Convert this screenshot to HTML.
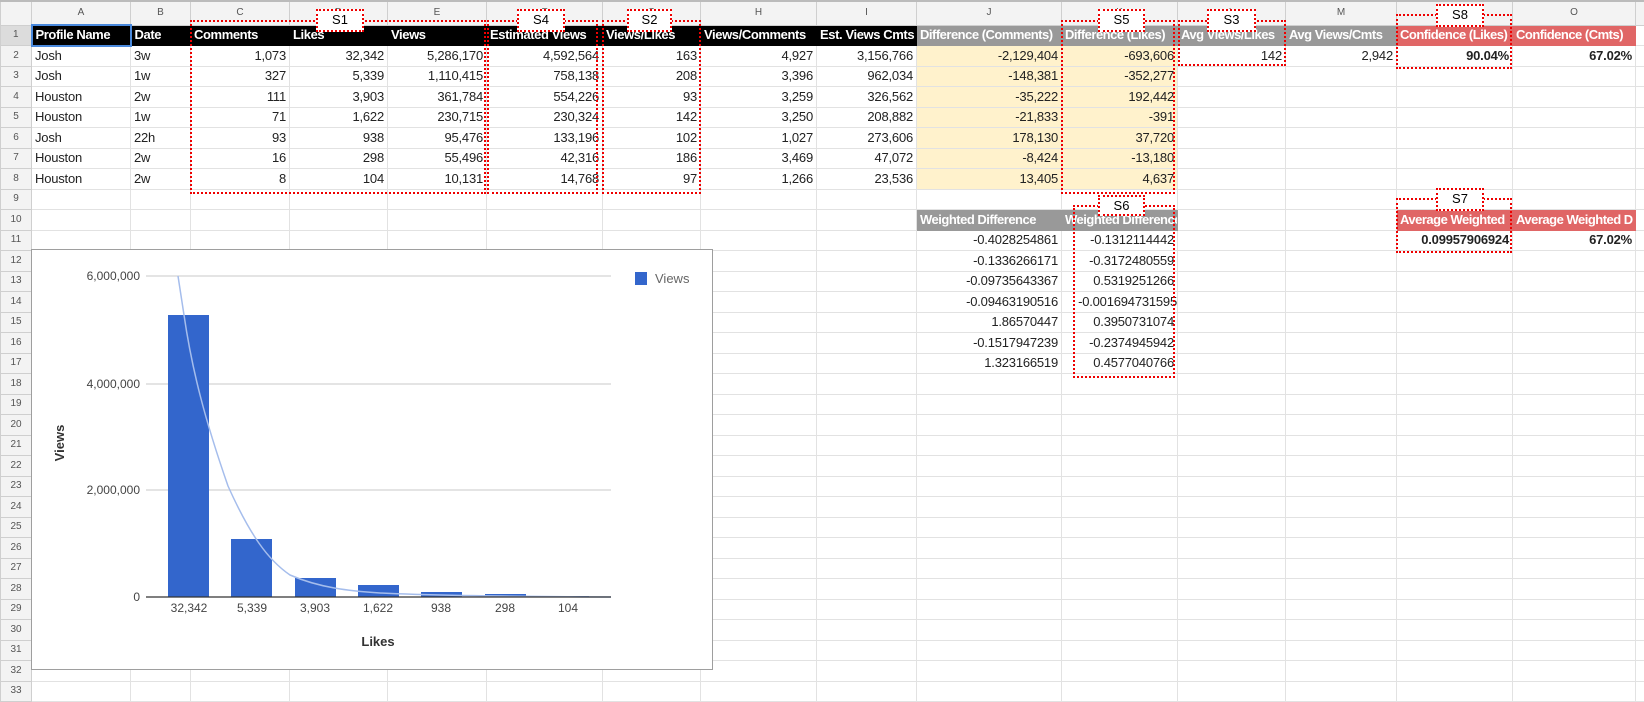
<!DOCTYPE html>
<html><head><meta charset="utf-8"><style>
*{box-sizing:border-box;margin:0;padding:0}
body{width:1644px;height:699px;overflow:hidden;background:#fff;font-family:"Liberation Sans",Arial,sans-serif;position:relative}
table{border-collapse:collapse;table-layout:fixed;position:absolute;left:0;top:0;width:1660px}
td{border:1px solid #e2e2e2;height:20.5px;font-size:13px;letter-spacing:-0.2px;color:#222;padding:0 3px;white-space:nowrap;overflow:hidden;text-overflow:clip;line-height:18px}
tr.ch td{height:24px;background:#f3f3f3;color:#555;font-size:10px;text-align:center;border-color:#cfcfcf;border-top:2px solid #bbb;letter-spacing:0}
td.rh{background:#f3f3f3;color:#555;font-size:10px;text-align:center;border-color:#cfcfcf;padding:0;letter-spacing:0}
td.sel{background:#dcdcdc}
.r{text-align:right}
.h{background:#000;color:#fff;font-weight:bold;border-color:#000;letter-spacing:-0.4px}
.g{background:#999;color:#fff;font-weight:bold;border-color:#999;letter-spacing:-0.5px}
.rd{background:#e06666;color:#fff;font-weight:bold;border-color:#e06666;letter-spacing:-0.5px}
.y{background:#fff2cc;text-align:right}
.b{font-weight:bold;text-align:right}
.box{position:absolute;border:2px dotted #e00;}
.lbl{position:absolute;border:2px dotted #e00;background:#fff;font-size:13px;text-align:center;line-height:18px;color:#000}
</style></head><body>
<table>
<colgroup><col style="width:31px"><col style="width:99px"><col style="width:60px"><col style="width:99px"><col style="width:98px"><col style="width:99px"><col style="width:116px"><col style="width:98px"><col style="width:116px"><col style="width:100px"><col style="width:145px"><col style="width:116px"><col style="width:108px"><col style="width:111px"><col style="width:116px"><col style="width:123px"><col style="width:25px"></colgroup>
<tr class="ch"><td></td><td class="sel">A</td><td>B</td><td>C</td><td>D</td><td>E</td><td>F</td><td>G</td><td>H</td><td>I</td><td>J</td><td>K</td><td>L</td><td>M</td><td>N</td><td>O</td><td></td></tr>
<tr><td class="rh sel">1</td><td class="h" style="border:2px solid #4a89dc">Profile Name</td><td class="h">Date</td><td class="h">Comments</td><td class="h">Likes</td><td class="h">Views</td><td class="h">Estimated Views</td><td class="h">Views/Likes</td><td class="h">Views/Comments</td><td class="h">Est. Views Cmts</td><td class="g">Difference (Comments)</td><td class="g">Difference (Likes)</td><td class="g">Avg Views/Likes</td><td class="g">Avg Views/Cmts</td><td class="rd">Confidence (Likes)</td><td class="rd">Confidence (Cmts)</td><td></td></tr>
<tr><td class="rh">2</td><td>Josh</td><td>3w</td><td class="r">1,073</td><td class="r">32,342</td><td class="r">5,286,170</td><td class="r">4,592,564</td><td class="r">163</td><td class="r">4,927</td><td class="r">3,156,766</td><td class="y">-2,129,404</td><td class="y">-693,606</td><td class="r">142</td><td class="r">2,942</td><td class="b">90.04%</td><td class="b">67.02%</td><td></td></tr>
<tr><td class="rh">3</td><td>Josh</td><td>1w</td><td class="r">327</td><td class="r">5,339</td><td class="r">1,110,415</td><td class="r">758,138</td><td class="r">208</td><td class="r">3,396</td><td class="r">962,034</td><td class="y">-148,381</td><td class="y">-352,277</td><td></td><td></td><td></td><td></td><td></td></tr>
<tr><td class="rh">4</td><td>Houston</td><td>2w</td><td class="r">111</td><td class="r">3,903</td><td class="r">361,784</td><td class="r">554,226</td><td class="r">93</td><td class="r">3,259</td><td class="r">326,562</td><td class="y">-35,222</td><td class="y">192,442</td><td></td><td></td><td></td><td></td><td></td></tr>
<tr><td class="rh">5</td><td>Houston</td><td>1w</td><td class="r">71</td><td class="r">1,622</td><td class="r">230,715</td><td class="r">230,324</td><td class="r">142</td><td class="r">3,250</td><td class="r">208,882</td><td class="y">-21,833</td><td class="y">-391</td><td></td><td></td><td></td><td></td><td></td></tr>
<tr><td class="rh">6</td><td>Josh</td><td>22h</td><td class="r">93</td><td class="r">938</td><td class="r">95,476</td><td class="r">133,196</td><td class="r">102</td><td class="r">1,027</td><td class="r">273,606</td><td class="y">178,130</td><td class="y">37,720</td><td></td><td></td><td></td><td></td><td></td></tr>
<tr><td class="rh">7</td><td>Houston</td><td>2w</td><td class="r">16</td><td class="r">298</td><td class="r">55,496</td><td class="r">42,316</td><td class="r">186</td><td class="r">3,469</td><td class="r">47,072</td><td class="y">-8,424</td><td class="y">-13,180</td><td></td><td></td><td></td><td></td><td></td></tr>
<tr><td class="rh">8</td><td>Houston</td><td>2w</td><td class="r">8</td><td class="r">104</td><td class="r">10,131</td><td class="r">14,768</td><td class="r">97</td><td class="r">1,266</td><td class="r">23,536</td><td class="y">13,405</td><td class="y">4,637</td><td></td><td></td><td></td><td></td><td></td></tr>
<tr><td class="rh">9</td><td></td><td></td><td></td><td></td><td></td><td></td><td></td><td></td><td></td><td></td><td></td><td></td><td></td><td></td><td></td><td></td></tr>
<tr><td class="rh">10</td><td></td><td></td><td></td><td></td><td></td><td></td><td></td><td></td><td></td><td class="g">Weighted Difference</td><td class="g">Weighted Difference</td><td></td><td></td><td class="rd">Average Weighted</td><td class="rd">Average Weighted D</td><td></td></tr>
<tr><td class="rh">11</td><td></td><td></td><td></td><td></td><td></td><td></td><td></td><td></td><td></td><td class="r">-0.4028254861</td><td class="r">-0.1312114442</td><td></td><td></td><td class="b">0.09957906924</td><td class="b">67.02%</td><td></td></tr>
<tr><td class="rh">12</td><td></td><td></td><td></td><td></td><td></td><td></td><td></td><td></td><td></td><td class="r">-0.1336266171</td><td class="r">-0.3172480559</td><td></td><td></td><td></td><td></td><td></td></tr>
<tr><td class="rh">13</td><td></td><td></td><td></td><td></td><td></td><td></td><td></td><td></td><td></td><td class="r">-0.09735643367</td><td class="r">0.5319251266</td><td></td><td></td><td></td><td></td><td></td></tr>
<tr><td class="rh">14</td><td></td><td></td><td></td><td></td><td></td><td></td><td></td><td></td><td></td><td class="r">-0.09463190516</td><td class="r" style="padding:0">-0.001694731595</td><td></td><td></td><td></td><td></td><td></td></tr>
<tr><td class="rh">15</td><td></td><td></td><td></td><td></td><td></td><td></td><td></td><td></td><td></td><td class="r">1.86570447</td><td class="r">0.3950731074</td><td></td><td></td><td></td><td></td><td></td></tr>
<tr><td class="rh">16</td><td></td><td></td><td></td><td></td><td></td><td></td><td></td><td></td><td></td><td class="r">-0.1517947239</td><td class="r">-0.2374945942</td><td></td><td></td><td></td><td></td><td></td></tr>
<tr><td class="rh">17</td><td></td><td></td><td></td><td></td><td></td><td></td><td></td><td></td><td></td><td class="r">1.323166519</td><td class="r">0.4577040766</td><td></td><td></td><td></td><td></td><td></td></tr>
<tr><td class="rh">18</td><td></td><td></td><td></td><td></td><td></td><td></td><td></td><td></td><td></td><td></td><td></td><td></td><td></td><td></td><td></td><td></td></tr>
<tr><td class="rh">19</td><td></td><td></td><td></td><td></td><td></td><td></td><td></td><td></td><td></td><td></td><td></td><td></td><td></td><td></td><td></td><td></td></tr>
<tr><td class="rh">20</td><td></td><td></td><td></td><td></td><td></td><td></td><td></td><td></td><td></td><td></td><td></td><td></td><td></td><td></td><td></td><td></td></tr>
<tr><td class="rh">21</td><td></td><td></td><td></td><td></td><td></td><td></td><td></td><td></td><td></td><td></td><td></td><td></td><td></td><td></td><td></td><td></td></tr>
<tr><td class="rh">22</td><td></td><td></td><td></td><td></td><td></td><td></td><td></td><td></td><td></td><td></td><td></td><td></td><td></td><td></td><td></td><td></td></tr>
<tr><td class="rh">23</td><td></td><td></td><td></td><td></td><td></td><td></td><td></td><td></td><td></td><td></td><td></td><td></td><td></td><td></td><td></td><td></td></tr>
<tr><td class="rh">24</td><td></td><td></td><td></td><td></td><td></td><td></td><td></td><td></td><td></td><td></td><td></td><td></td><td></td><td></td><td></td><td></td></tr>
<tr><td class="rh">25</td><td></td><td></td><td></td><td></td><td></td><td></td><td></td><td></td><td></td><td></td><td></td><td></td><td></td><td></td><td></td><td></td></tr>
<tr><td class="rh">26</td><td></td><td></td><td></td><td></td><td></td><td></td><td></td><td></td><td></td><td></td><td></td><td></td><td></td><td></td><td></td><td></td></tr>
<tr><td class="rh">27</td><td></td><td></td><td></td><td></td><td></td><td></td><td></td><td></td><td></td><td></td><td></td><td></td><td></td><td></td><td></td><td></td></tr>
<tr><td class="rh">28</td><td></td><td></td><td></td><td></td><td></td><td></td><td></td><td></td><td></td><td></td><td></td><td></td><td></td><td></td><td></td><td></td></tr>
<tr><td class="rh">29</td><td></td><td></td><td></td><td></td><td></td><td></td><td></td><td></td><td></td><td></td><td></td><td></td><td></td><td></td><td></td><td></td></tr>
<tr><td class="rh">30</td><td></td><td></td><td></td><td></td><td></td><td></td><td></td><td></td><td></td><td></td><td></td><td></td><td></td><td></td><td></td><td></td></tr>
<tr><td class="rh">31</td><td></td><td></td><td></td><td></td><td></td><td></td><td></td><td></td><td></td><td></td><td></td><td></td><td></td><td></td><td></td><td></td></tr>
<tr><td class="rh">32</td><td></td><td></td><td></td><td></td><td></td><td></td><td></td><td></td><td></td><td></td><td></td><td></td><td></td><td></td><td></td><td></td></tr>
<tr><td class="rh">33</td><td></td><td></td><td></td><td></td><td></td><td></td><td></td><td></td><td></td><td></td><td></td><td></td><td></td><td></td><td></td><td></td></tr>
</table>

<svg style="position:absolute;left:31px;top:249px" width="683" height="422" viewBox="31 249 683 422">
<rect x="31.5" y="249.5" width="681" height="420" fill="#fff" stroke="#9e9e9e"/>
<g stroke="#dcdcdc" stroke-width="1.5"><line x1="146" y1="276" x2="611" y2="276"/><line x1="146" y1="384" x2="611" y2="384"/><line x1="146" y1="490" x2="611" y2="490"/></g>
<g font-family="Liberation Sans,Arial,sans-serif" font-size="12" fill="#444" text-anchor="end">
<text x="140" y="280">6,000,000</text><text x="140" y="388">4,000,000</text><text x="140" y="494">2,000,000</text><text x="140" y="601">0</text></g>
<g fill="#3366cc">
<rect x="168" y="315" width="41" height="282"/>
<rect x="231" y="539" width="41" height="58"/>
<rect x="295" y="578" width="41" height="19"/>
<rect x="358" y="585" width="41" height="12"/>
<rect x="421" y="592" width="41" height="5"/>
<rect x="485" y="594" width="41" height="3"/>
<rect x="548" y="596" width="41" height="1"/>
</g>
<path d="M178 276 L184 315 C192 370 205 420 228 486 C250 535 268 560 290 575 C320 588 350 591 380 593 C420 595 470 596 611 597" fill="none" stroke="#a5bdec" stroke-width="1.5"/>
<line x1="146" y1="597" x2="611" y2="597" stroke="#333" stroke-width="1.2"/>
<g font-family="Liberation Sans,Arial,sans-serif" font-size="12" fill="#444" text-anchor="middle">
<text x="189" y="612">32,342</text><text x="252" y="612">5,339</text><text x="315" y="612">3,903</text><text x="378" y="612">1,622</text><text x="441" y="612">938</text><text x="505" y="612">298</text><text x="568" y="612">104</text></g>
<text x="378" y="646" font-family="Liberation Sans,Arial,sans-serif" font-size="13" font-weight="bold" fill="#333" text-anchor="middle">Likes</text>
<text transform="translate(64 443) rotate(-90)" font-family="Liberation Sans,Arial,sans-serif" font-size="13" font-weight="bold" fill="#333" text-anchor="middle">Views</text>
<rect x="635" y="272" width="12" height="13" fill="#3366cc"/>
<text x="655" y="283" font-family="Liberation Sans,Arial,sans-serif" font-size="13" fill="#666">Views</text>
</svg>

<div class="box" style="left:190px;top:20px;width:296px;height:174px"></div>
<div class="lbl" style="left:316px;top:9px;width:48px;height:23px">S1</div>
<div class="box" style="left:487px;top:20px;width:111px;height:174px"></div>
<div class="lbl" style="left:517px;top:9px;width:48px;height:23px">S4</div>
<div class="box" style="left:602px;top:20px;width:99px;height:174px"></div>
<div class="lbl" style="left:627px;top:9px;width:45px;height:23px">S2</div>
<div class="box" style="left:1061px;top:20px;width:114px;height:174px"></div>
<div class="lbl" style="left:1098px;top:9px;width:47px;height:23px">S5</div>
<div class="box" style="left:1178px;top:20px;width:108px;height:46px"></div>
<div class="lbl" style="left:1207px;top:9px;width:49px;height:23px">S3</div>
<div class="box" style="left:1396px;top:14px;width:116px;height:55px"></div>
<div class="lbl" style="left:1436px;top:4px;width:48px;height:23px">S8</div>
<div class="box" style="left:1396px;top:198px;width:116px;height:55px"></div>
<div class="lbl" style="left:1436px;top:188px;width:48px;height:23px">S7</div>
<div class="box" style="left:1073px;top:205px;width:102px;height:173px"></div>
<div class="lbl" style="left:1098px;top:195px;width:47px;height:21px">S6</div>
</body></html>
